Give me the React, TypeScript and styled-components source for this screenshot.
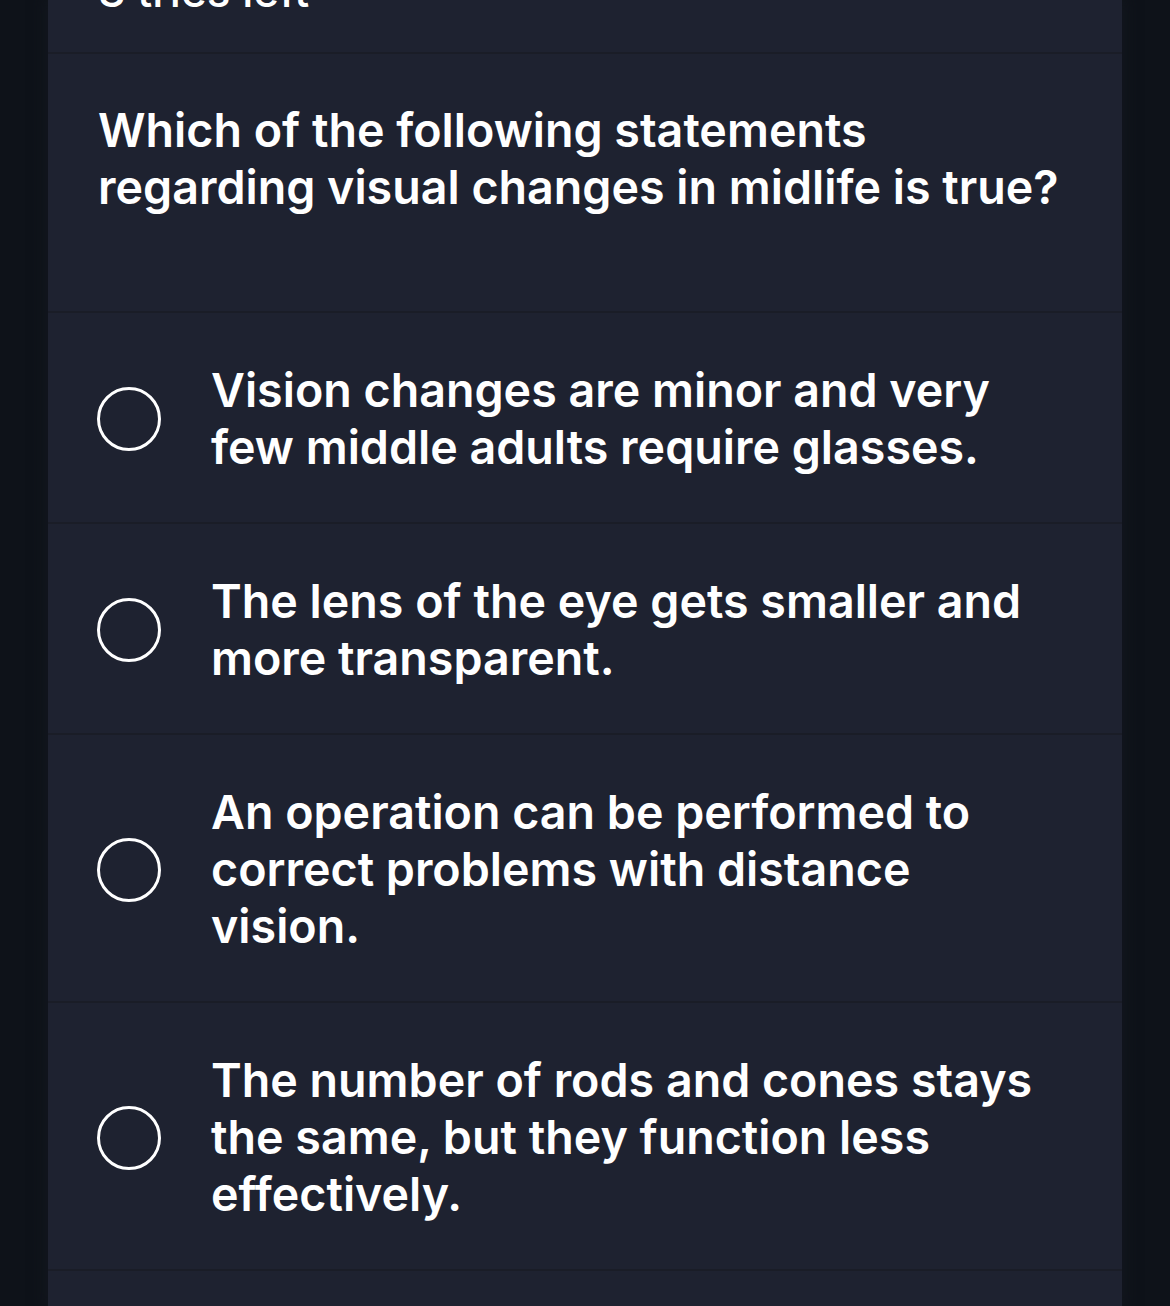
import React from "react";
import styled, { createGlobalStyle } from "styled-components";

const Global = createGlobalStyle`
  html, body { margin: 0; padding: 0; background: #0e1219; }
  body { font-family: Inter, "Noto Sans", "Liberation Sans", sans-serif; }
`;

const Page = styled.div`
  width: 1170px;
  height: 1306px;
  overflow: hidden;
  background: #0e1219;
  display: flex;
  justify-content: center;
`;

const Card = styled.div`
  width: 1074px;
  background: #1e2230;
  box-shadow: 0 0 14px 2px rgba(20, 24, 32, 0.9);
  display: flex;
  flex-direction: column;
`;

const Header = styled.div`
  height: 52px;
  border-bottom: 2px solid #1a1d27;
  overflow: hidden;
  padding-left: 50px;
`;

const Tries = styled.div`
  margin-top: -31px;
  font-size: 44px;
  font-weight: 500;
  line-height: 44px;
  color: #ffffff;
`;

const Question = styled.h1`
  margin: 0;
  padding: 48px 50px 95px;
  font-size: 46.6px;
  font-weight: 600;
  line-height: 57px;
  color: #ffffff;
  border-bottom: 2px solid #1a1d27;
`;

const Option = styled.label`
  display: flex;
  align-items: center;
  gap: 50px;
  padding: 49px 50px 46px 49px;
  border-bottom: 2px solid #1a1d27;
  cursor: pointer;
`;

const Radio = styled.span`
  flex: 0 0 auto;
  width: 58px;
  height: 58px;
  border: 3px solid #ffffff;
  border-radius: 50%;
`;

const OptionText = styled.span`
  font-size: 46.6px;
  font-weight: 600;
  line-height: 57px;
  color: #ffffff;
  max-width: 850px;
`;

const options = [
  "Vision changes are minor and very few middle adults require glasses.",
  "The lens of the eye gets smaller and more transparent.",
  "An operation can be performed to correct problems with distance vision.",
  "The number of rods and cones stays the same, but they function less effectively.",
];

export default function App() {
  return (
    <>
      <Global />
      <Page>
        <Card>
          <Header>
            <Tries>3 tries left</Tries>
          </Header>
          <Question>
            Which of the following statements
            <br />
            regarding visual changes in midlife is true?
          </Question>
          {options.map((o) => (
            <Option key={o}>
              <Radio />
              <OptionText>{o}</OptionText>
            </Option>
          ))}
        </Card>
      </Page>
    </>
  );
}
